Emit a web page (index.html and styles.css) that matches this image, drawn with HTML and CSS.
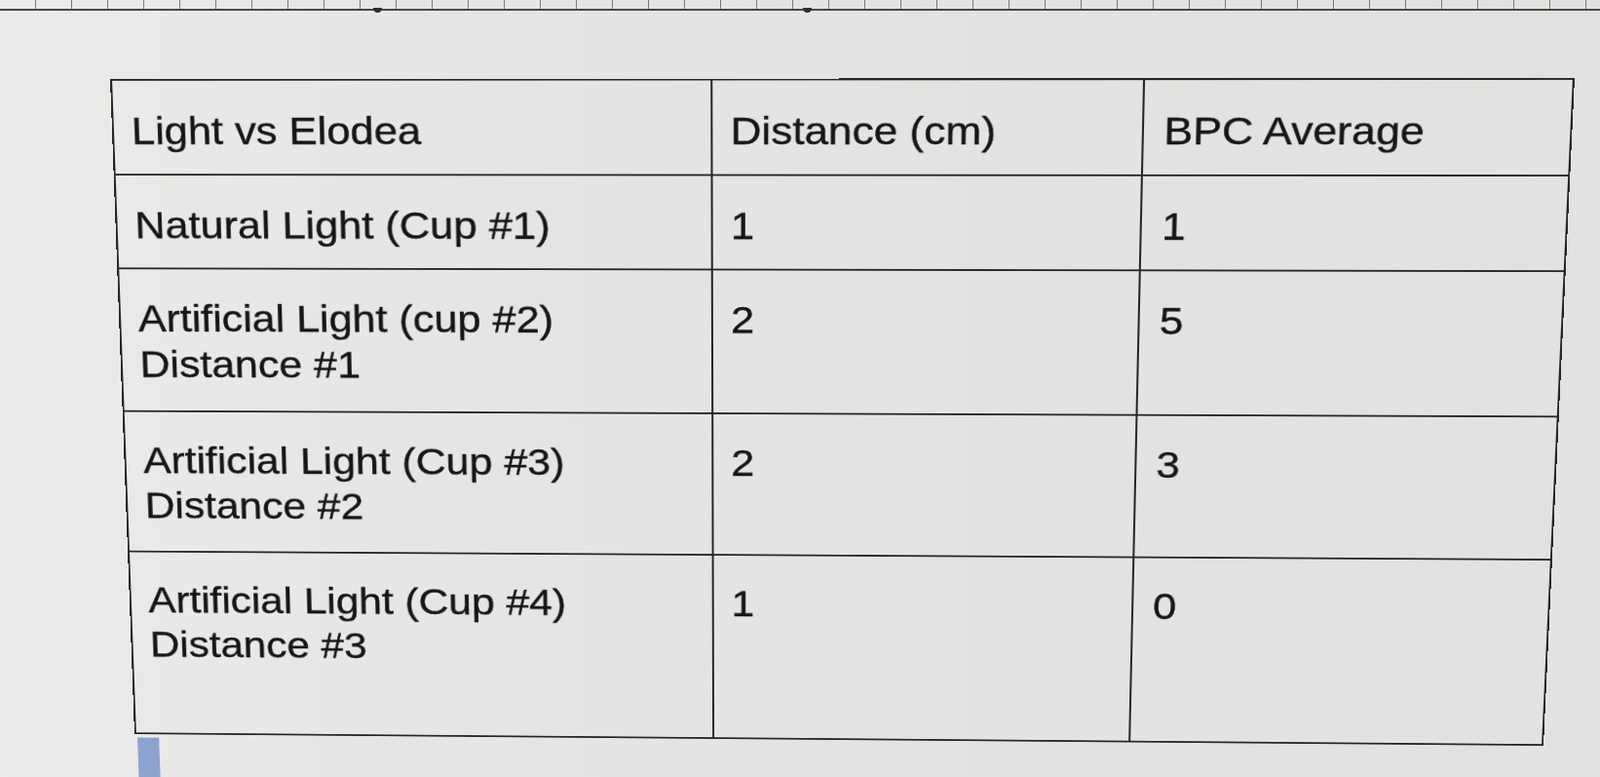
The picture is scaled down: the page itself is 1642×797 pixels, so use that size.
FILE: index.html
```html
<!DOCTYPE html>
<html lang="en">
<head>
<meta charset="utf-8">
<title>Light vs Elodea</title>
<link rel="stylesheet" href="styles.css">
</head>
<body>
<div class="page">
  <div class="ruler">
    <span class="tab tab-a"></span>
    <span class="tab tab-b"></span>
  </div>
  <div class="stage">
    <div class="sheet">
      <div class="table">
        <div class="cell">Light vs Elodea</div>
        <div class="cell">Distance (cm)</div>
        <div class="cell cell-last">BPC Average</div>

        <div class="cell">Natural Light (Cup #1)</div>
        <div class="cell">1</div>
        <div class="cell cell-last">1</div>

        <div class="cell">Artificial Light (cup #2)<br>Distance #1</div>
        <div class="cell">2</div>
        <div class="cell cell-last">5</div>

        <div class="cell">Artificial Light (Cup #3)<br>Distance #2</div>
        <div class="cell">2</div>
        <div class="cell cell-last">3</div>

        <div class="cell">Artificial Light (Cup #4)<br>Distance #3</div>
        <div class="cell">1</div>
        <div class="cell cell-last">0</div>
      </div>
      <div class="caret"></div>
    </div>
  </div>
</div>
</body>
</html>
```

FILE: styles.css
```css
html, body {
  margin: 0;
  height: 100%;
  overflow: hidden;
}

body {
  background: linear-gradient(90deg, #ebebe9 0%, #e6e6e4 25%, #e3e3e1 60%, #e2e2e0 100%);
  font-family: "Liberation Sans", Arial, sans-serif;
  color: #161616;
}

.page {
  display: flex;
  flex-direction: column;
}

.ruler {
  position: relative;
  height: 9px;
  border-bottom: 2px solid #4a4a4a;
  background: repeating-linear-gradient(90deg, transparent 0 36px, #7a7a7a 36px 37px);
}

.tab {
  position: absolute;
  top: 8px;
  width: 9px;
  height: 5px;
  background: #2e2e2e;
  border-radius: 0 0 5px 5px;
}

.tab-a { left: 383px; }
.tab-b { left: 824px; }

.stage {
  padding: 70px 0 0 113px;
}

.sheet {
  width: 1473px;
  transform-origin: 0 0;
  transform: matrix3d(1.000305, -0.00066554, 0, -0.0000133476,
                      0.034633, 0.930929, 0, 0.0000519787,
                      0, 0, 1, 0,
                      0, 0, 0, 1);
}

.table {
  display: grid;
  grid-template-columns: 611px 434px 426px;
  grid-template-rows: 105px 105px 162px 162px 214px;
  height: 750px;
  box-sizing: border-box;
  border-top: 2px solid #262626;
  border-left: 2px solid #262626;
}

.cell {
  box-sizing: border-box;
  border-right: 2px solid #262626;
  border-bottom: 2px solid #262626;
  padding: 29px 18px 0;
  font-size: 43.4px;
  line-height: 52px;
  white-space: nowrap;
  -webkit-text-stroke: 0.45px #161616;
}

.cell-last {
  padding-left: 20px;
}

.caret {
  width: 23px;
  height: 70px;
  margin: 4px 0 0 3px;
  background: #8da3cf;
}
```
